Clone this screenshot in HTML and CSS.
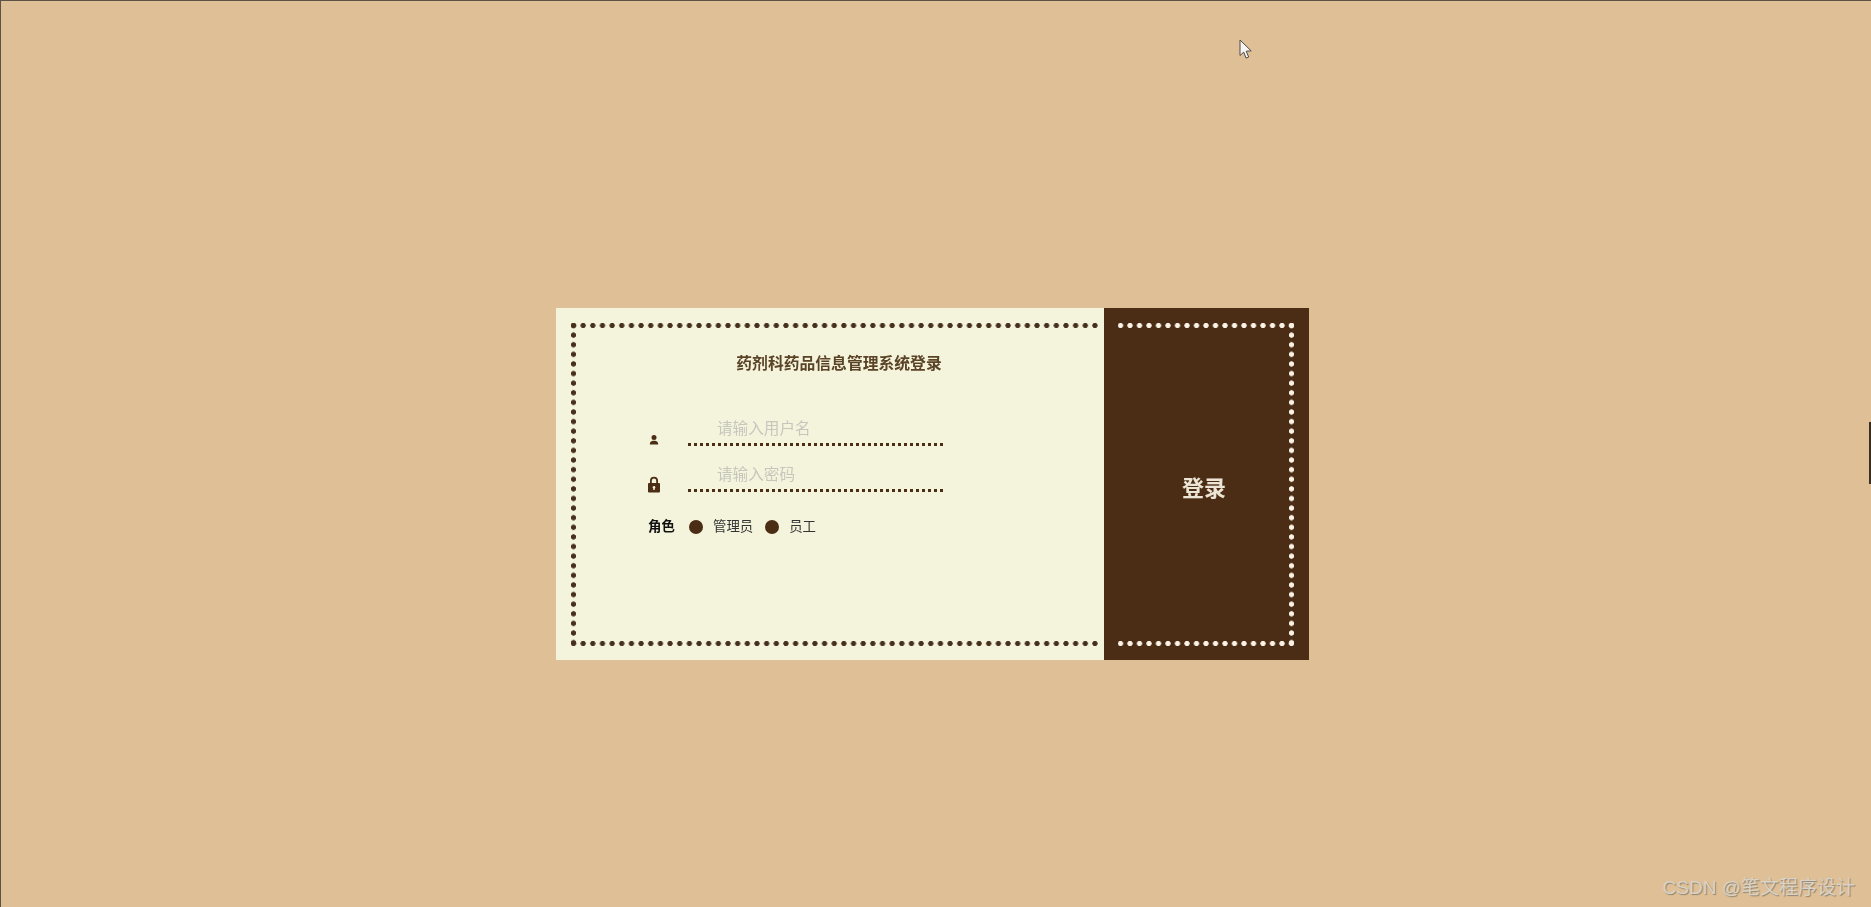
FILE: index.html
```html
<!DOCTYPE html>
<html lang="zh-CN">
<head>
<meta charset="utf-8">
<title>药剂科药品信息管理系统登录</title>
<link rel="stylesheet" href="styles.css">
</head>
<body>
<main class="card">
  <section class="panel-left">
    <form class="frame-left">
      <h1 class="title">药剂科药品信息管理系统登录</h1>
      <div class="field">
        <span class="icon">
          <svg width="14" height="17" viewBox="0 0 14 17"><circle cx="7" cy="6.6" r="2.500"/><path d="M2.800 13.400c0-2.400 1.400-3.200 2.900-3.600h2.600c1.500.4 2.900 1.200 2.900 3.600z"/></svg>
        </span>
        <input class="text-input" type="text" placeholder="请输入用户名">
      </div>
      <div class="field">
        <span class="icon icon-lock">
          <svg width="14" height="17" viewBox="0 0 14 17"><path fill-rule="evenodd" d="M3 7V4.800a4 4 0 0 1 8 0V7h1a1 1 0 0 1 1 1v7.500a1 1 0 0 1-1 1H2a1 1 0 0 1-1-1V8a1 1 0 0 1 1-1zm1.800 0h4.400V4.800a2.200 2.200 0 0 0-4.400 0zM7 10a1.400 1.400 0 0 0-.7 2.600V14h1.400v-1.400A1.400 1.400 0 0 0 7 10z"/></svg>
        </span>
        <input class="text-input" type="password" placeholder="请输入密码">
      </div>
      <div class="role-row">
        <span class="role-label">角色</span>
        <label class="role-option"><span class="radio"></span>管理员</label>
        <label class="role-option"><span class="radio"></span>员工</label>
      </div>
    </form>
  </section>
  <section class="panel-right">
    <div class="frame-right">
      <button class="login" type="button">登录</button>
    </div>
  </section>
</main>
<svg class="cursor" width="14" height="21" viewBox="0 0 14 21"><path d="M1 1v15.500l3.700-3.400 2.400 6 2.600-1.100-2.500-5.800 5-.3z" fill="#f7f5f1" stroke="#4d4a4a" stroke-width="1"/></svg>
<div class="edge-mark"></div>
<div class="watermark">CSDN @笔文程序设计</div>
</body>
</html>
```
FILE: styles.css
```css
* { box-sizing: border-box; }
html, body { margin: 0; height: 100%; }
body {
  height: 907px;
  overflow: hidden;
  background: #dfbf95;
  border-top: 1px solid #5c5348;
  border-left: 1px solid #5c5348;
  padding: 307px 0 0 555px;
  font-family: "Noto Sans CJK SC", "Liberation Sans", sans-serif;
  position: relative;
}
.card { display: flex; width: 753px; height: 352px; filter: blur(0.35px); }
.panel-left { width: 548px; background: #f4f4dc; padding: 14.500px 0 14px 15px; }
.panel-right { width: 205px; background: #4b2c14; padding: 14.500px 0 14px 14px; }

.frame-left {
  width: 527px;
  height: 323px;
  padding-top: 29px;
  --dot: radial-gradient(circle, #46301c 2.3px, transparent 2.9px);
  background-image: var(--dot), var(--dot), var(--dot);
  background-size: 9.67px 5px, 9.67px 5px, 5px 9.62px;
  background-position: -2.33px 0, -2.33px 100%, 0 -2.31px;
  background-repeat: repeat-x, repeat-x, repeat-y;
}
.frame-right {
  width: 176px;
  height: 323px;
  display: flex;
  --dot: radial-gradient(circle, #fbf3e6 2.3px, transparent 2.9px);
  background-image: var(--dot), var(--dot), var(--dot);
  background-size: 9.5px 5px, 9.5px 5px, 5px 9.62px;
  background-position: -2.25px 0, -2.25px 100%, 100% -2.31px;
  background-repeat: repeat-x, repeat-x, repeat-y;
}

.title {
  margin: 0 0 26.5px;
  padding-left: 9px;
  font-size: 15.8px;
  line-height: 22px;
  font-weight: 700;
  color: #5a4327;
  text-align: center;
}
.field {
  display: flex;
  align-items: flex-end;
  height: 46px;
  margin-left: 76px;
}
.icon { width: 14px; height: 17px; margin-right: 27px; color: #4b2c14; fill: currentColor; display: flex; margin-bottom: -2px; }
.icon-lock { margin-bottom: -1px; }
.icon svg { display: block; }
.text-input {
  width: 255px;
  height: 32px;
  padding: 0 0 4px 29px;
  border: 0;
  border-bottom: 3px dotted #4b2c14;
  background: transparent;
  font: 15.6px "Noto Sans CJK SC", "Liberation Sans", sans-serif;
  outline: none;
}
.text-input::placeholder { color: #c6c6bd; opacity: 1; }

.role-row {
  display: flex;
  align-items: center;
  height: 20px;
  margin: 23px 0 0 77px;
  font-size: 13.4px;
  color: #333;
}
.role-label { font-weight: 700; color: #111; width: 41px; }
.role-option { display: flex; align-items: center; margin-right: 12px; }
.radio { width: 14px; height: 14px; border-radius: 50%; background: #4b2c14; margin: 3px 10px 0 0; }

.login {
  flex: 1;
  border: 0;
  background: transparent;
  padding: 4px 4px 0 0;
  color: #ece4d4;
  font: 700 22px "Noto Sans CJK SC", "Liberation Sans", sans-serif;
}
.cursor { position: absolute; left: 1238px; top: 38px; }
.edge-mark { position: absolute; right: 0; top: 421px; width: 2px; height: 62px; background: #3a2e20; }
.watermark {
  position: absolute;
  right: 16px;
  top: 873px;
  font-family: "Liberation Sans", "Noto Sans CJK SC", sans-serif;
  font-size: 19px;
  line-height: 28px;
  color: #d8d3c6;
  text-shadow: 1px 1px 1px #8f8371;
  white-space: nowrap;
}
```
